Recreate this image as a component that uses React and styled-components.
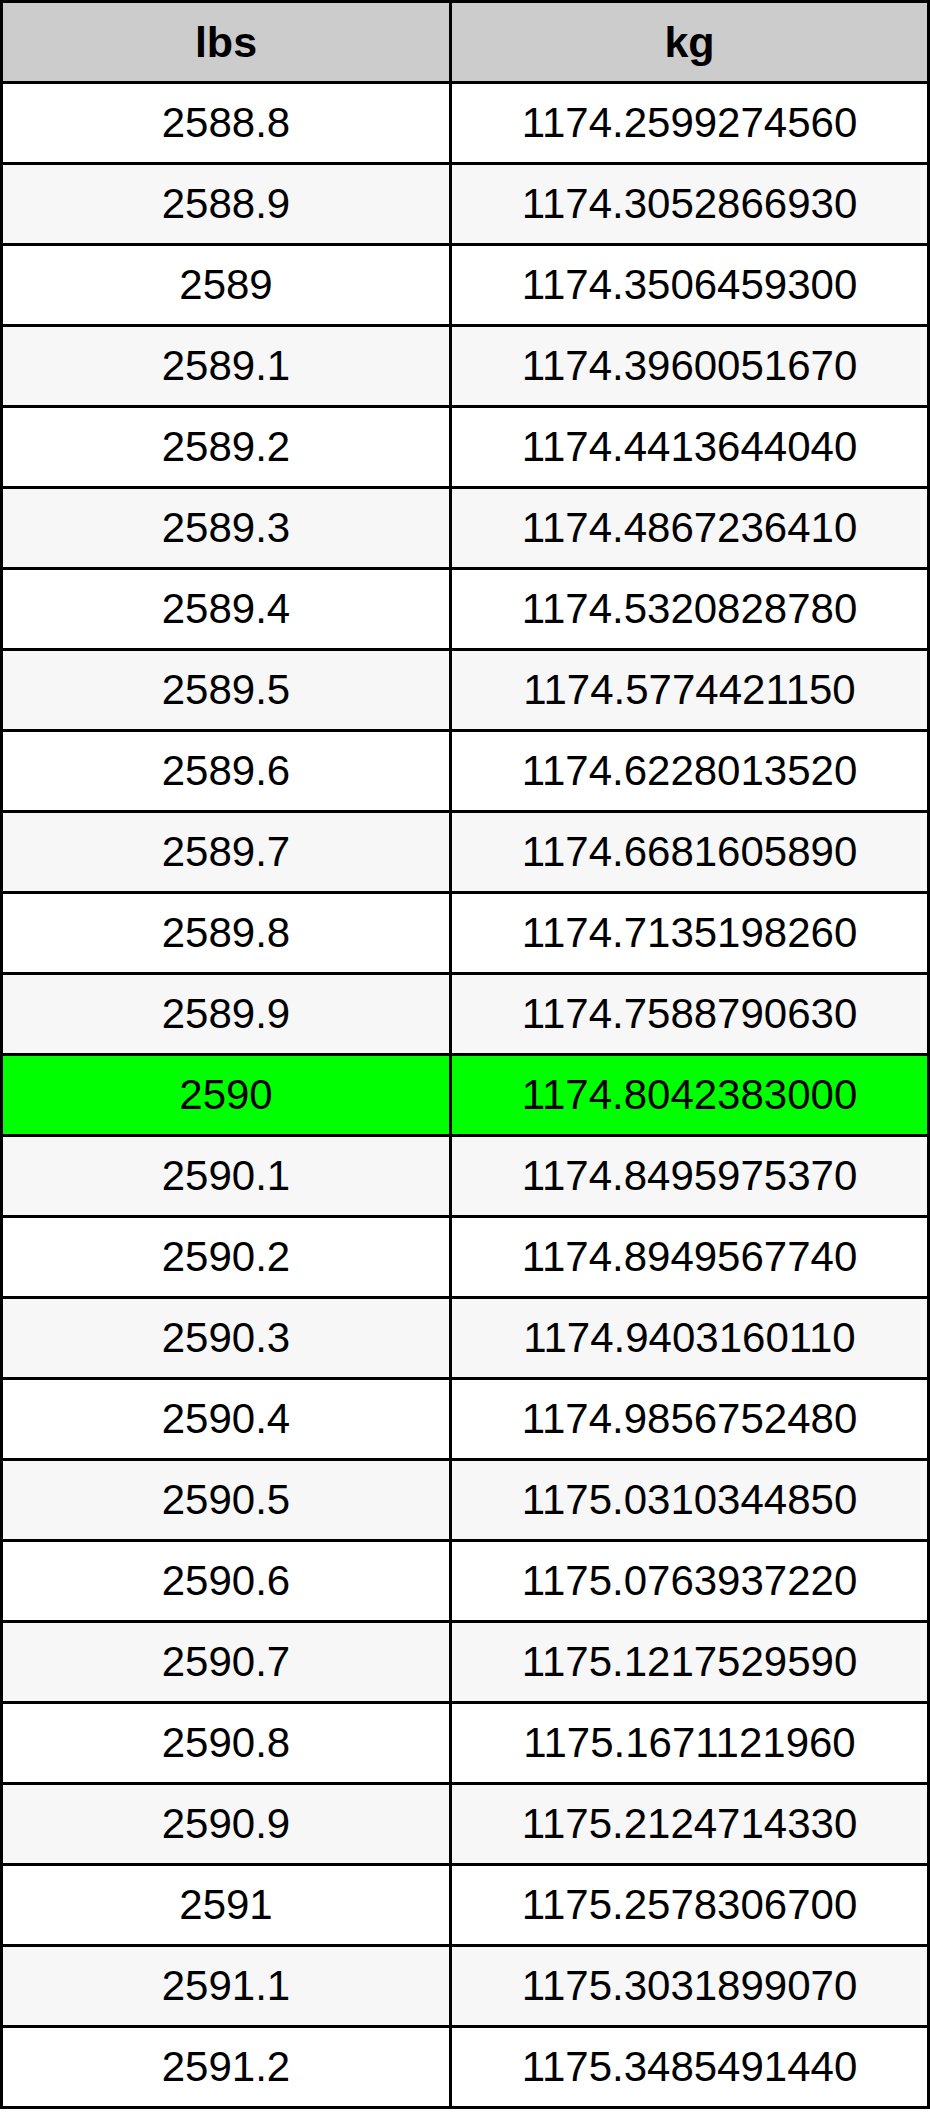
import React from 'react';
import styled, { createGlobalStyle } from 'styled-components';

const GlobalStyle = createGlobalStyle`
  body {
    margin: 0;
    background: #ffffff;
    font-family: "Liberation Sans", Arial, sans-serif;
  }
`;

const rows = [
    ['2588.8', '1174.2599274560'],
    ['2588.9', '1174.3052866930'],
    ['2589', '1174.3506459300'],
    ['2589.1', '1174.3960051670'],
    ['2589.2', '1174.4413644040'],
    ['2589.3', '1174.4867236410'],
    ['2589.4', '1174.5320828780'],
    ['2589.5', '1174.5774421150'],
    ['2589.6', '1174.6228013520'],
    ['2589.7', '1174.6681605890'],
    ['2589.8', '1174.7135198260'],
    ['2589.9', '1174.7588790630'],
    ['2590', '1174.8042383000'],
    ['2590.1', '1174.8495975370'],
    ['2590.2', '1174.8949567740'],
    ['2590.3', '1174.9403160110'],
    ['2590.4', '1174.9856752480'],
    ['2590.5', '1175.0310344850'],
    ['2590.6', '1175.0763937220'],
    ['2590.7', '1175.1217529590'],
    ['2590.8', '1175.1671121960'],
    ['2590.9', '1175.2124714330'],
    ['2591', '1175.2578306700'],
    ['2591.1', '1175.3031899070'],
    ['2591.2', '1175.3485491440'],
]

const selected = '2590'

const App = () => {
    return (
        <>
            <GlobalStyle />
            <Table>
                <colgroup>
                    <col style={{ width: '449px' }} />
                    <col />
                </colgroup>
                <thead>
                    <tr>
                        <HeaderCell>lbs</HeaderCell>
                        <HeaderCell>kg</HeaderCell>
                    </tr>
                </thead>
                <tbody>
                    {rows.map(([lbs, kg], i) => (
                        <Row key={lbs} $striped={i % 2 === 1} $highlight={lbs === selected}>
                            <Cell>{lbs}</Cell>
                            <Cell>{kg}</Cell>
                        </Row>
                    ))}
                </tbody>
            </Table>
        </>
    );
};

export default App;

const Table = styled.table`
  width: 930px;
  border-collapse: collapse;
  border: 3px solid #000;
  table-layout: fixed;
`;

const HeaderCell = styled.th`
  height: 78px;
  padding: 0;
  border: 3px solid #000;
  background: #cccccc;
  color: #000;
  font-size: 43px;
  font-weight: bold;
  text-align: center;
  vertical-align: middle;
`;

const Row = styled.tr`
  background: ${p => p.$highlight ? '#00ff00' : p.$striped ? '#f7f7f7' : '#ffffff'};
`;

const Cell = styled.td`
  height: 78px;
  padding: 0;
  border: 3px solid #000;
  color: #000;
  font-size: 42px;
  text-align: center;
  vertical-align: middle;
`;
